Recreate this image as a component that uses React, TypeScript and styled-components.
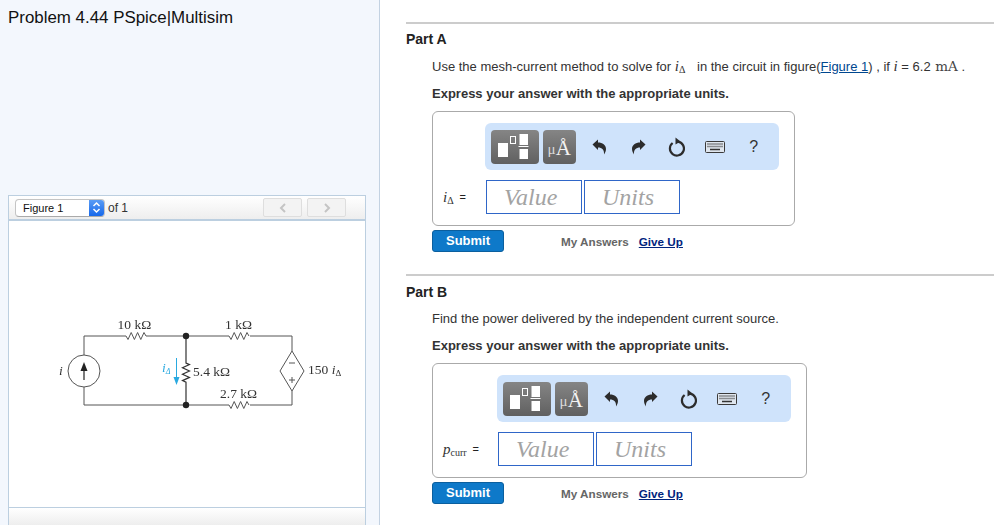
import styled, { createGlobalStyle } from 'styled-components';

const GlobalStyle = createGlobalStyle`
  html, body {
    margin: 0;
    padding: 0;
    background: #fff;
    font-family: "Liberation Sans", Arial, sans-serif;
    color: #333;
  }
  * {
    box-sizing: border-box;
  }
`

const Page = styled.div`
  display: flex;
  width: 998px;
  height: 525px;
  overflow: hidden;
`

const LeftPanel = styled.aside`
  display: flex;
  flex-direction: column;
  width: 380px;
  height: 525px;
  flex-shrink: 0;
  background: #f3f7fd;
  border-right: 1px solid #c3d2e2;
  padding: 9px 13px 0 8px;
`

const Title = styled.h1`
  margin: 0;
  height: 186px;
  font-size: 16.9px;
  line-height: 18px;
  font-weight: 400;
  color: #111;
`

const FigureBox = styled.section`
  display: flex;
  flex-direction: column;
  height: 330px;
  border: 1px solid #bccfe0;
  border-bottom: 0;
  background: #fff;
`

const FigureBar = styled.div`
  display: flex;
  align-items: center;
  height: 25px;
  flex-shrink: 0;
  padding-left: 6px;
  background: linear-gradient(#fff, #eeeeee);
  border-bottom: 2px solid #bccfe0;
`

const FigureSelect = styled.div`
  display: flex;
  width: 90px;
  height: 18px;
  border: 1px solid #c4c4c4;
  border-bottom-color: #aaa;
  border-radius: 4px;
  overflow: hidden;
  background: #fff;
  font-size: 11px;
  line-height: 16px;
  color: #111;
`

const SelectText = styled.span`
  flex: 1;
  padding-left: 7px;
`

const SelectArrows = styled.span`
  display: flex;
  align-items: center;
  justify-content: center;
  width: 15px;
  background: linear-gradient(#5a9cf5, #1668ea);
`

const OfText = styled.span`
  margin-left: 3px;
  font-size: 12px;
  color: #333;
`

const NavButtons = styled.div`
  display: flex;
  gap: 5px;
  margin-left: auto;
  margin-right: 19px;
`

const NavButton = styled.div`
  display: flex;
  align-items: center;
  justify-content: center;
  width: 39px;
  height: 19px;
  border: 1px solid #dedede;
  border-radius: 2px;
  background: #f3f3f3;
`

const FigureBody = styled.div`
  flex: 1;
  background: #fff;
`

const CircuitDrawing = styled.svg`
  display: block;
  filter: blur(0.35px);
  text {
    font-family: "Liberation Serif", "Times New Roman", serif;
    font-size: 13.5px;
    fill: #333;
  }
`

const FigureFooter = styled.div`
  height: 18px;
  flex-shrink: 0;
  border-top: 1px solid #bccfe0;
  background: linear-gradient(#fff, #eeeeee);
`

const RightPanel = styled.main`
  flex: 1;
  padding: 22px 4px 0 26px;
`

const PartHeader = styled.h2`
  margin: 0;
  height: 34px;
  border-top: 2px solid #cccccc;
  padding-top: 6px;
  font-size: 14px;
  line-height: 18px;
  font-weight: 700;
  color: #222;
`

const PartContent = styled.div`
  padding-left: 26px;
`

const Prompt = styled.p`
  margin: 0;
  height: 29px;
  padding-top: 2px;
  font-size: 13px;
  line-height: 16px;
  color: #333;
`

const PartSection = styled.section`
  margin-bottom: 22px;

  & + & ${PartHeader} {
    height: 35px;
    padding-top: 7px;
  }

  & + & ${Prompt} {
    height: 28px;
  }
`

const Instruction = styled.p`
  margin: 0;
  height: 26px;
  padding-top: 1px;
  font-size: 13px;
  line-height: 16px;
  font-weight: 700;
  color: #333;
`

const FigureLink = styled.a`
  color: #00478f;
  text-decoration: underline;
`

const MathText = styled.span<{ $gap?: number }>`
  margin-right: ${p => p.$gap ?? 0}px;
  font-family: "Liberation Serif", "Times New Roman", serif;
  font-style: italic;
  font-size: 15px;
  color: #333;
`

const UnitText = styled.span`
  margin-left: 1px;
  font-family: "DejaVu Serif", "Liberation Serif", serif;
  font-size: 13.5px;
  color: #444;
`

const Sub = styled.sub`
  font-size: 10px;
  font-style: normal;
  line-height: 0;
  vertical-align: -2px;
`

const AnswerBox = styled.div<{ $labelWidth: number }>`
  display: grid;
  grid-template-columns: ${p => p.$labelWidth}px auto;
  grid-template-rows: 47px 34px;
  row-gap: 10px;
  align-items: center;
  width: fit-content;
  height: 115px;
  padding: 11px 15px 0 12px;
  border: 1px solid #aaaaaa;
  border-radius: 6px;
  background: #fff;
`

const EditorBar = styled.div`
  grid-column: 2;
  display: flex;
  align-items: center;
  width: 294px;
  height: 47px;
  margin-left: -1px;
  padding: 0 6px;
  border-radius: 6px;
  background: #cfe3fb;
`

const ToolButton = styled.div<{ $w: number }>`
  display: flex;
  align-items: center;
  justify-content: center;
  width: ${p => p.$w}px;
  height: 34px;
  margin-right: 4px;
  border-radius: 4px;
  background: linear-gradient(#858585, #606060);
  color: #fff;
  font-family: "Liberation Serif", serif;
`

const MicroSign = styled.span`
  font-size: 15px;
  color: #dcdcdc;
  margin-top: 6px;
`

const AngstromSign = styled.span`
  font-size: 21px;
  color: #f2f2f2;
  margin-top: 3px;
`

const IconGroup = styled.div`
  display: flex;
  align-items: center;
  margin-left: 1px;
`

const IconSlot = styled.div`
  display: flex;
  align-items: center;
  justify-content: center;
  width: 38.5px;
  height: 34px;
  color: #333;
  font-size: 16px;
`

const MathLabel = styled.div`
  grid-row: 2;
  display: flex;
  align-items: center;
  gap: 6px;
  margin-left: -2px;
  font-size: 11px;
  color: #222;
  white-space: nowrap;
`

const Inputs = styled.div`
  grid-row: 2;
  grid-column: 2;
  display: flex;
  gap: 2px;
`

const AnswerInput = styled.div`
  width: 96px;
  height: 34px;
  padding-left: 17px;
  border: 1px solid #2f66c8;
  background: #fff;
  font-family: "Liberation Serif", "Times New Roman", serif;
  font-style: italic;
  font-size: 24px;
  line-height: 32px;
  color: #a3a3a3;
`

const ActionRow = styled.div`
  display: flex;
  align-items: center;
  height: 22px;
  margin-top: 4px;
`

const SubmitButton = styled.button`
  width: 72px;
  height: 22px;
  padding: 0 0 2px;
  border: 1px solid #0b5f9e;
  border-radius: 3px;
  background: #0e79c9;
  color: #fff;
  font-family: inherit;
  font-size: 13px;
  font-weight: 700;
`

const MyAnswers = styled.span`
  margin-left: 57px;
  font-size: 11.7px;
  font-weight: 700;
  color: #666;
`

const GiveUp = styled.a`
  margin-left: 10px;
  font-size: 11.7px;
  font-weight: 700;
  color: #00247d;
  text-decoration: underline;
`

const zigzagH = (x: number, y: number) =>
  `M${x} ${y} l2 3.5 l3.2 -7 l3.2 7 l3.2 -7 l3.2 7 l3.2 -7 l2 3.5`

function Circuit() {
  return (
    <CircuitDrawing width="356" height="285" viewBox="9 221 356 285">
      <g fill="none" stroke="#555" strokeWidth="1">
        <path d="M84 355 V336 H126" />
        <path d={zigzagH(126, 336)} />
        <path d="M146 336 H229" />
        <path d={zigzagH(229, 336)} />
        <path d="M250 336 H292 V351" />
        <path d="M292 391 V405 H250" />
        <path d={zigzagH(229, 405)} />
        <path d="M229 405 H84 V387" />
        <path d="M186 336 V363 l3.5 1.6 l-7 3.2 l7 3.2 l-7 3.2 l7 3.2 l-7 3.2 l3.5 1.6 V405" strokeWidth="1.2" stroke="#333" />
        <circle cx="84" cy="371" r="16" />
        <path d="M280 371 L292 351 L304 371 L292 391 Z" />
        <path d="M289 363 H295" />
        <path d="M289 380 H295 M292 377 V383" />
        <path d="M176.5 358 V378" stroke="#29a9e0" />
      </g>
      <path d="M84 362 L80.5 371 H87.5 Z" fill="#222" />
      <path d="M84 368 V380" stroke="#222" strokeWidth="1.2" />
      <path d="M173.5 377 H179.5 L176.5 385 Z" fill="#29a9e0" />
      <circle cx="186" cy="336" r="3.2" fill="#222" />
      <circle cx="186" cy="405" r="3.2" fill="#222" />
      <text x="117.5" y="329">10 kΩ</text>
      <text x="225" y="329">1 kΩ</text>
      <text x="193" y="376">5.4 kΩ</text>
      <text x="220" y="397.5">2.7 kΩ</text>
      <text x="308" y="374">150 <tspan fontStyle="italic">i</tspan><tspan fontSize="9" dy="2">Δ</tspan></text>
      <text x="59" y="375" fontStyle="italic">i</text>
      <text x="162" y="372" fontStyle="italic" style={{ fill: '#29a9e0' }}>i<tspan fontSize="8" dy="2">Δ</tspan></text>
    </CircuitDrawing>
  )
}

function TemplateIcon() {
  return (
    <svg width="31" height="25" viewBox="0 0 31 25" style={{ marginRight: 2 }}>
      <rect x="0" y="9" width="10" height="14" fill="#fff" />
      <rect x="12.5" y="2.5" width="5" height="7" fill="none" stroke="#fff" strokeWidth="1" />
      <rect x="21.5" y="0" width="8.5" height="11" fill="#fff" />
      <rect x="20.5" y="12" width="10" height="1" fill="#fff" />
      <rect x="21.5" y="15" width="8.5" height="10" fill="#fff" />
    </svg>
  )
}

function UndoIcon({ flip }: { flip?: boolean }) {
  return (
    <svg width="15" height="16" viewBox="0 0 15 16" style={flip ? { transform: 'scaleX(-1)' } : undefined}>
      <path d="M0.5 5.5 L6 0.5 V3.5 C10.5 3.5 14 6 14 10 C14 12 13 14 12 15.5 C12.5 11 10 8.5 6 8.5 V11 Z" fill="#2c2c2c" />
    </svg>
  )
}

function ResetIcon() {
  return (
    <svg width="17" height="20" viewBox="0 0 17 20">
      <path d="M4.6 6 A7 7 0 1 0 10 4.6" fill="none" stroke="#2c2c2c" strokeWidth="2.2" />
      <path d="M7.5 0.5 L12.5 4.4 L7.5 7.5 Z" fill="#2c2c2c" />
    </svg>
  )
}

function KeyboardIcon() {
  return (
    <svg width="20" height="12" viewBox="0 0 20 12">
      <rect x="0.5" y="0.5" width="19" height="11" rx="1" fill="#dfe6ee" stroke="#3a3a3a" />
      <path d="M2.5 3 H17.5 M2.5 5.5 H17.5" stroke="#333" strokeWidth="1.5" strokeDasharray="1 1" />
      <path d="M5 8.5 H15" stroke="#333" strokeWidth="1.5" />
    </svg>
  )
}

function Editor() {
  return (
    <EditorBar>
      <ToolButton $w={50}><TemplateIcon /></ToolButton>
      <ToolButton $w={34}><MicroSign>μ</MicroSign><AngstromSign>Å</AngstromSign></ToolButton>
      <IconGroup>
        <IconSlot><UndoIcon /></IconSlot>
        <IconSlot><UndoIcon flip /></IconSlot>
        <IconSlot><ResetIcon /></IconSlot>
        <IconSlot><KeyboardIcon /></IconSlot>
        <IconSlot>?</IconSlot>
      </IconGroup>
    </EditorBar>
  )
}

function Answer({ label, sub, labelWidth }: { label: string; sub: string; labelWidth: number }) {
  return (
    <>
      <AnswerBox $labelWidth={labelWidth}>
        <Editor />
        <MathLabel>
          <MathText>{label}<Sub>{sub}</Sub></MathText>
          <span>=</span>
        </MathLabel>
        <Inputs>
          <AnswerInput>Value</AnswerInput>
          <AnswerInput>Units</AnswerInput>
        </Inputs>
      </AnswerBox>
      <ActionRow>
        <SubmitButton>Submit</SubmitButton>
        <MyAnswers>My Answers</MyAnswers>
        <GiveUp href="#">Give Up</GiveUp>
      </ActionRow>
    </>
  )
}

export default function App() {
  return (
    <Page>
      <GlobalStyle />
      <LeftPanel>
        <Title>Problem 4.44 PSpice|Multisim</Title>
        <FigureBox>
          <FigureBar>
            <FigureSelect>
              <SelectText>Figure 1</SelectText>
              <SelectArrows>
                <svg width="9" height="13" viewBox="0 0 9 13">
                  <path d="M1.5 5 L4.5 2 L7.5 5 M1.5 8 L4.5 11 L7.5 8" fill="none" stroke="#fff" strokeWidth="1.5" />
                </svg>
              </SelectArrows>
            </FigureSelect>
            <OfText>of 1</OfText>
            <NavButtons>
              <NavButton>
                <svg width="8" height="10" viewBox="0 0 8 10"><path d="M6 1 L2 5 L6 9" fill="none" stroke="#c4c4c4" strokeWidth="2" /></svg>
              </NavButton>
              <NavButton>
                <svg width="8" height="10" viewBox="0 0 8 10"><path d="M2 1 L6 5 L2 9" fill="none" stroke="#c4c4c4" strokeWidth="2" /></svg>
              </NavButton>
            </NavButtons>
          </FigureBar>
          <FigureBody>
            <Circuit />
          </FigureBody>
          <FigureFooter />
        </FigureBox>
      </LeftPanel>
      <RightPanel>
        <PartSection>
          <PartHeader>Part A</PartHeader>
          <PartContent>
            <Prompt>
              Use the mesh-current method to solve for <MathText $gap={8}>i<Sub>Δ</Sub></MathText> in the circuit in figure(<FigureLink href="#">Figure 1</FigureLink>) , if <MathText>i</MathText> = 6.2 <UnitText>mA</UnitText> .
            </Prompt>
            <Instruction>Express your answer with the appropriate units.</Instruction>
            <Answer label="i" sub="Δ" labelWidth={41} />
          </PartContent>
        </PartSection>
        <PartSection>
          <PartHeader>Part B</PartHeader>
          <PartContent>
            <Prompt>Find the power delivered by the independent current source.</Prompt>
            <Instruction>Express your answer with the appropriate units.</Instruction>
            <Answer label="p" sub="curr" labelWidth={53} />
          </PartContent>
        </PartSection>
      </RightPanel>
    </Page>
  )
}
